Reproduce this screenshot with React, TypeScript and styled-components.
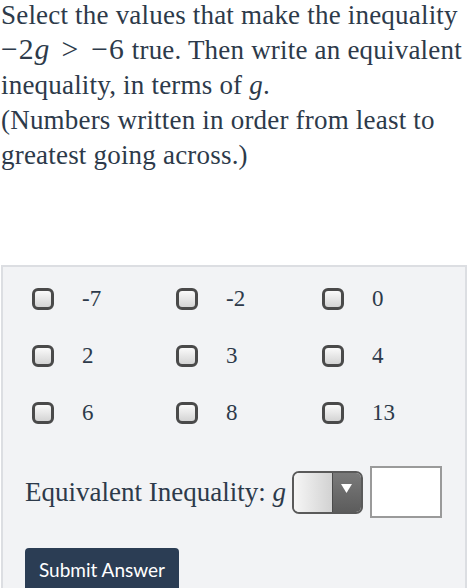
import styled, { createGlobalStyle } from 'styled-components'

const GlobalStyle = createGlobalStyle`
	html, body {
		margin: 0;
		padding: 0;
		background: #ffffff;
	}
	body {
		font-family: 'Liberation Serif', Georgia, serif;
		color: #2d3a4a;
		overflow: hidden;
	}
`

const Page = styled.div`
	width: 474px;
	height: 588px;
	overflow: hidden;
`

const Question = styled.div`
	font-size: 27px;
	line-height: 35px;
	margin-top: -2px;
	padding-left: 1px;
	letter-spacing: 0.2px;
	height: 267px;
`

const Para = styled.p`
	margin: 0;
`

const M = styled.span`
	font-style: italic;
`

const MathExpr = styled.span`
	font-size: 1.1em;
	line-height: 1;
	letter-spacing: 1px;
`

const Rel = styled.span`
	margin: 0 12px 0 11px;
`

const Panel = styled.div`
	margin-left: 1px;
	width: 466px;
	background: #f2f3f5;
	border: 2px solid #dcdee2;
	border-bottom: none;
	height: 330px;
	box-sizing: border-box;
	padding: 20px 0 0 29px;
`

const Choices = styled.div`
	display: grid;
	grid-template-columns: 144px 146px 120px;
	grid-auto-rows: 57px;
`

const Choice = styled.label`
	display: flex;
	align-items: center;
	height: 24px;
	gap: 28px;
	font-size: 23px;
`

const Box = styled.span`
	width: 22px;
	height: 22px;
	box-sizing: border-box;
	border: 3px solid #4a4a4a;
	border-radius: 6px;
	background: linear-gradient(#fafafa, #d4d4d4);
	flex: none;
`

const Equiv = styled.div`
	display: flex;
	align-items: center;
	margin-top: 8px;
	margin-left: -7px;
	font-size: 27px;
	gap: 4px;
`

const Select = styled.div`
	display: flex;
	width: 71px;
	height: 43px;
	box-sizing: border-box;
	border: 2px solid #5a5a5a;
	border-radius: 7px;
	overflow: hidden;
	margin-left: 2px;
`

const SelectBody = styled.div`
	flex: 1;
	background: linear-gradient(90deg, #f6f6f6, #d2d2d2);
`

const SelectArrow = styled.div`
	width: 29px;
	background: linear-gradient(#7a7a7a, #5c5c5c);
	border-left: 1px solid #4a4a4a;
	display: flex;
	justify-content: center;
	padding-top: 11px;
	box-sizing: border-box;
`

const Input = styled.div`
	width: 72px;
	height: 52px;
	box-sizing: border-box;
	border: 2px solid #9a9a9a;
	background: #ffffff;
	margin-left: 3px;
`

const Submit = styled.button`
	margin-top: 30px;
	margin-left: -7px;
	width: 154px;
	height: 48px;
	background: #2b3d54;
	color: #ffffff;
	border: none;
	border-radius: 4px 4px 0 0;
	font-family: Lato, 'Open Sans', sans-serif;
	font-size: 19px;
	padding: 0 0 6px 0;
	text-align: center;
`

const values = ['-7', '-2', '0', '2', '3', '4', '6', '8', '13']

export default function App() {
	return (
		<Page>
			<GlobalStyle />
			<Question>
				<Para>
					Select the values that make the inequality{' '}
					<MathExpr>
						−2<M>g</M>
						<Rel>&gt;</Rel>−6
					</MathExpr>{' '}
					true. Then write an equivalent inequality, in terms of <M>g</M>.
				</Para>
				<Para>(Numbers written in order from least to greatest going across.)</Para>
			</Question>
			<Panel>
				<Choices>
					{values.map((v) => (
						<Choice key={v}>
							<Box />
							{v}
						</Choice>
					))}
				</Choices>
				<Equiv>
					<span>
						Equivalent Inequality: <M>g</M>
					</span>
					<Select>
						<SelectBody />
						<SelectArrow>
							<svg width="11" height="9" viewBox="0 0 11 9">
								<path d="M0 0 H11 L5.5 9 Z" fill="#ffffff" />
							</svg>
						</SelectArrow>
					</Select>
					<Input />
				</Equiv>
				<Submit>Submit Answer</Submit>
			</Panel>
		</Page>
	)
}
